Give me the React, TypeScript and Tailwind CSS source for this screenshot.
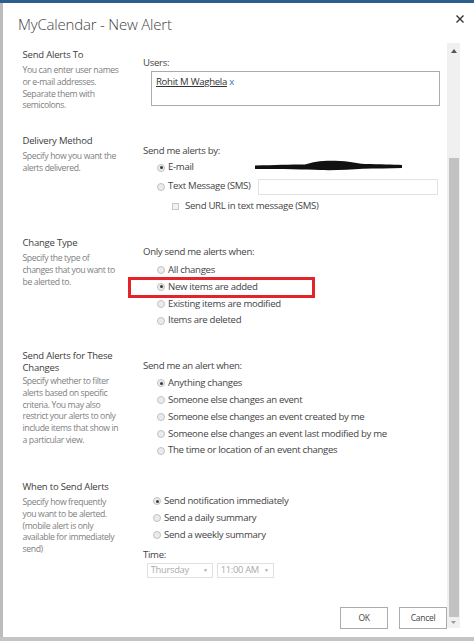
import React from "react";

const Radio = ({ checked }: { checked?: boolean }) => (
  <span className="inline-flex w-[8px] h-[8px] rounded-full border border-[#c2c2c2] bg-[#ebebeb] items-center justify-center shrink-0">
    {checked && <span className="w-[3px] h-[3px] rounded-full bg-[#3a3a3a]" />}
  </span>
);

const RadioRow = ({
  label,
  checked,
  h = "h-[16.85px]",
  pl = "pl-[14px]",
}: {
  label: string;
  checked?: boolean;
  h?: string;
  pl?: string;
}) => (
  <div className={`flex items-center gap-[3px] ${h} ${pl}`}>
    <Radio checked={checked} />
    <span className="whitespace-nowrap">{label}</span>
  </div>
);

const Label = ({ lines, lh = "leading-[13px]" }: { lines: string[]; lh?: string }) => (
  <div className={`text-[9.5px] ${lh} text-[#3c3c3c] tracking-[-0.2px]`}>
    {lines.map((l) => (
      <div key={l} className="whitespace-nowrap">
        {l}
      </div>
    ))}
  </div>
);

const Desc = ({ lines, mt = "mt-[4.6px]" }: { lines: string[]; mt?: string }) => (
  <div className={`text-[8.7px] leading-[11.7px] text-[#808080] tracking-[-0.4px] ${mt}`}>
    {lines.map((l) => (
      <div key={l} className="whitespace-nowrap">
        {l}
      </div>
    ))}
  </div>
);

export default function App() {
  return (
    <div className="w-[474px] h-[641px] overflow-hidden flex flex-col bg-[#c4c4c4] font-['Open_Sans','Noto_Sans',sans-serif]">
      <div className="h-[3px] shrink-0 bg-[#2d5f8d]" />
      <div className="flex h-[634px] shrink-0">
        <div className="w-[3px] bg-[#bcbcbc]" />
        <div className="flex-1 bg-white flex flex-col">
          {/* header */}
          <div className="h-[40px] shrink-0 flex items-start justify-between pl-[15px] pr-[10px]">
            <div className="pt-[11px] text-[15px] leading-[20px] font-light text-[#444] tracking-[-0.2px]">
              MyCalendar - New Alert
            </div>
            <svg width="8" height="8" viewBox="0 0 8 8" className="mt-[12px]">
              <path d="M0.5 0.5 L7.5 7.5 M7.5 0.5 L0.5 7.5" stroke="#333" strokeWidth="1.4" />
            </svg>
          </div>

          {/* main */}
          <div className="h-[586px] shrink-0 flex">
            <div className="flex-1 flex flex-col pl-[19.5px] pt-[4.5px] text-[9.6px] text-[#444] tracking-[-0.3px]">
              {/* Section 1 */}
              <div className="grid grid-cols-[120.5px_1fr] h-[86px]">
                <div>
                  <Label lines={["Send Alerts To"]} />
                  <Desc lines={["You can enter user names", "or e-mail addresses.", "Separate them with", "semicolons."]} />
                </div>
                <div className="pt-[8.3px]">
                  <div className="leading-[13px]">Users:</div>
                  <div className="mt-[2.2px] ml-[8px] w-[289px] h-[35px] border border-[#ababab] pl-[4px] pt-[3px] leading-[13px]">
                    <span className="underline text-[#333]">Rohit M Waghela</span>{" "}
                    <span className="text-[#3b6fb3]">x</span>
                  </div>
                </div>
              </div>

              {/* Section 2 */}
              <div className="grid grid-cols-[120.5px_1fr] h-[102px]">
                <div>
                  <Label lines={["Delivery Method"]} />
                  <Desc lines={["Specify how you want the", "alerts delivered."]} />
                </div>
                <div className="pt-[10px]">
                  <div className="leading-[13px]">Send me alerts by:</div>
                  <div className="relative mt-[1.7px]">
                    <RadioRow label="E-mail" checked h="h-[19px]" />
                    <svg
                      width="148"
                      height="12"
                      viewBox="0 0 148 12"
                      className="absolute left-[112px] top-[2px]"
                    >
                      <path
                        d="M0 5.5 C20 5 35 4.5 50 4.5 C58 2 66 0.5 80 0.8 C95 1 100 3.5 110 4 C125 4.2 138 4.5 147 5 L147 8 C135 8.5 120 8.5 108 8.8 C95 9.5 80 10.5 65 10 C50 9.5 30 9 0 9 Z"
                        fill="#111"
                      />
                    </svg>
                  </div>
                  <div className="flex items-center h-[19px] pl-[14px] gap-[3px]">
                    <Radio />
                    <span className="whitespace-nowrap">Text Message (SMS)</span>
                    <span className="ml-[4px] w-[180px] h-[16px] border border-[#e2e2e2] shrink-0" />
                  </div>
                  <div className="flex items-center h-[20px] pl-[29px] gap-[6px]">
                    <span className="w-[7px] h-[7px] border border-[#c8c8c8] bg-[#f2f2f2] shrink-0" />
                    <span className="whitespace-nowrap">Send URL in text message (SMS)</span>
                  </div>
                </div>
              </div>

              {/* Section 3 */}
              <div className="relative grid grid-cols-[120.5px_1fr] h-[114px]">
                <div>
                  <Label lines={["Change Type"]} />
                  <Desc lines={["Specify the type of", "changes that you want to", "be alerted to."]} />
                </div>
                <div className="pt-[9.7px]">
                  <div className="leading-[13px]">Only send me alerts when:</div>
                  <div className="mt-[3.35px]">
                    <RadioRow label="All changes" h="h-[16.9px]" />
                    <RadioRow label="New items are added" checked h="h-[16.9px]" />
                    <RadioRow label="Existing items are modified" h="h-[16.9px]" />
                    <RadioRow label="Items are deleted" h="h-[16.9px]" />
                  </div>
                </div>
                <div className="absolute left-[105.2px] top-[41.8px] w-[187.6px] h-[20.4px] border-[3px] border-[#e3242b]" />
              </div>

              {/* Section 4 */}
              <div className="grid grid-cols-[120.5px_1fr] h-[130px]">
                <div>
                  <Label lines={["Send Alerts for These", "Changes"]} lh="leading-[12.5px]" />
                  <Desc
                    mt="mt-[1.65px]"
                    lines={[
                      "Specify whether to filter",
                      "alerts based on specific",
                      "criteria. You may also",
                      "restrict your alerts to only",
                      "include items that show in",
                      "a particular view.",
                    ]}
                  />
                </div>
                <div className="pt-[9px]">
                  <div className="leading-[13px]">Send me an alert when:</div>
                  <div className="mt-[3.4px]">
                    <RadioRow label="Anything changes" checked />
                    <RadioRow label="Someone else changes an event" />
                    <RadioRow label="Someone else changes an event created by me" />
                    <RadioRow label="Someone else changes an event last modified by me" />
                    <RadioRow label="The time or location of an event changes" />
                  </div>
                </div>
              </div>

              {/* Section 5 */}
              <div className="grid grid-cols-[120.5px_1fr]">
                <div>
                  <Label lines={["When to Send Alerts"]} />
                  <Desc
                    lines={[
                      "Specify how frequently",
                      "you want to be alerted.",
                      "(mobile alert is only",
                      "available for immediately",
                      "send)",
                    ]}
                  />
                </div>
                <div className="pt-[13px]">
                  <RadioRow label="Send notification immediately" checked h="h-[17px]" pl="pl-[10px]" />
                  <RadioRow label="Send a daily summary" h="h-[17px]" pl="pl-[10px]" />
                  <RadioRow label="Send a weekly summary" h="h-[17px]" pl="pl-[10px]" />
                  <div className="mt-[4px] leading-[13px]">Time:</div>
                  <div className="mt-[2.5px] ml-[3.7px] flex gap-[4px] text-[#aaaaaa] text-[9.4px]">
                    <div className="w-[66px] h-[15px] border border-[#e0e0e0] flex items-center justify-between pl-[3px] pr-[4px]">
                      <span>Thursday</span>
                      <span className="text-[5px]">▼</span>
                    </div>
                    <div className="w-[57px] h-[15px] border border-[#e0e0e0] flex items-center justify-between pl-[3px] pr-[4px]">
                      <span>11:00 AM</span>
                      <span className="text-[5px]">▼</span>
                    </div>
                  </div>
                </div>
              </div>

              {/* buttons */}
              <div className="mt-auto flex justify-end gap-[11px]">
                <div className="w-[48px] h-[22px] border border-[#ababab] flex items-center justify-center text-[8.5px] text-[#444]">
                  OK
                </div>
                <div className="w-[48px] h-[22px] border border-[#ababab] flex items-center justify-center text-[8.5px] text-[#444]">
                  Cancel
                </div>
              </div>
            </div>

            {/* scrollbar */}
            <div className="w-[13px] mr-[14px] mb-[1px] bg-[#f0f0f0] flex flex-col">
              <div className="h-[16px] flex items-center justify-center">
                <svg width="6" height="4" viewBox="0 0 6 4">
                  <path d="M0 4 L3 0 L6 4 Z" fill="#555" />
                </svg>
              </div>
              <div className="h-[99px]" />
              <div className="flex-1 ml-[2.3px] mr-[0.7px] bg-[#c2c2c2]" />
              <div className="h-[11px] flex items-center justify-center">
                <svg width="5" height="3" viewBox="0 0 5 3">
                  <path d="M0 0 L5 0 L2.5 3 Z" fill="#999" />
                </svg>
              </div>
            </div>
          </div>
          <div className="h-[8px] shrink-0" />
        </div>
      </div>
      <div className="h-[4px] shrink-0 bg-[#c4c4c4]" />
    </div>
  );
}
